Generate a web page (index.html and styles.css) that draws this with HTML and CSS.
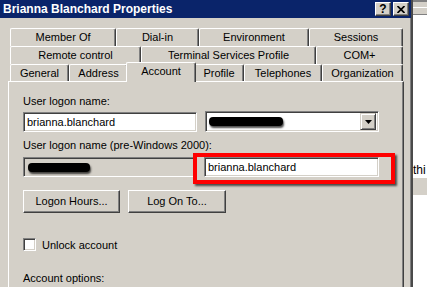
FILE: index.html
```html
<!DOCTYPE html>
<html lang="en">
<head>
    <meta charset="UTF-8">
    <title>Brianna Blanchard Properties</title>
    <link rel="stylesheet" href="styles.css">
</head>
<body>
    <div class="screen">
        <div class="dialog">
            <div class="titlebar">
                <span class="title">Brianna Blanchard Properties</span>
                <div class="caption-buttons">
                    <span class="cap-btn cap-help">?</span>
                    <span class="cap-btn">
                        <svg width="8" height="7" viewBox="0 0 8 7"><path d="M0.5 0 L7.5 7 M7.5 0 L0.5 7" stroke="#000" stroke-width="1.7" fill="none"/></svg>
                    </span>
                </div>
            </div>

            <!-- tab rows, back to front -->
            <div class="tabs">
                <div class="tab-row">
                    <span class="tab w-member">Member Of</span>
                    <span class="tab w-dialin">Dial-in</span>
                    <span class="tab w-env">Environment</span>
                    <span class="tab w-sessions">Sessions</span>
                </div>
                <div class="tab-row">
                    <span class="tab w-remote">Remote control</span>
                    <span class="tab w-terminal">Terminal Services Profile</span>
                    <span class="tab w-com">COM+</span>
                </div>
                <div class="tab-row front">
                    <span class="tab w-general">General</span>
                    <span class="tab w-address">Address</span>
                    <span class="tab w-account active">Account</span>
                    <span class="tab w-profile">Profile</span>
                    <span class="tab w-phones">Telephones</span>
                    <span class="tab w-org">Organization</span>
                </div>
            </div>

            <div class="panel">
                <div class="label">User logon name:</div>
                <div class="field-row">
                    <div class="edit w-half">brianna.blanchard</div>
                    <div class="combo">
                        <div class="combo-text"><span class="redact redact-combo"></span></div>
                        <span class="combo-btn">
                            <svg width="7" height="4" viewBox="0 0 7 4"><path d="M0 0 H7 L3.5 4 Z" fill="#000"/></svg>
                        </span>
                    </div>
                </div>

                <div class="label label-pre">User logon name (pre-Windows 2000):</div>
                <div class="field-row field-row-pre">
                    <div class="edit edit-disabled w-half"><span class="redact redact-domain"></span></div>
                    <div class="edit w-sam">brianna.blanchard</div>
                    <div class="highlight"></div>
                </div>

                <div class="button-row">
                    <span class="btn">Logon Hours...</span>
                    <span class="btn btn-wide">Log On To...</span>
                </div>

                <div class="check-row">
                    <span class="checkbox"></span>
                    <span>Unlock account</span>
                </div>

                <div class="label label-options">Account options:</div>
            </div>
        </div>

        <div class="behind">
            <div class="behind-top"></div>
            <div class="behind-text">thi</div>
            <div class="behind-band"></div>
        </div>
    </div>
</body>
</html>
```

FILE: styles.css
```css
body {
    margin: 0;
    font-family: "Liberation Sans", Arial, sans-serif;
    font-size: 11px;
    color: #000;
    background-color: #fff;
    overflow: hidden;
}
.screen {
    display: flex;
    width: 427px;
    height: 287px;
    overflow: hidden;
}
.dialog {
    width: 411px;
    height: 287px;
    flex-shrink: 0;
    background-color: #d4d0c8;
    border-right: 2px solid #4a4a4a;
    box-shadow: inset -1px 0 #808080;
}
.titlebar {
    height: 18px;
    background-color: #0a246a;
    display: flex;
    justify-content: space-between;
    align-items: flex-start;
}
.title {
    color: #fff;
    font-weight: bold;
    font-size: 12px;
    line-height: 18px;
    padding-left: 3px;
}
.caption-buttons {
    display: flex;
    gap: 2px;
    margin-top: 2px;
    margin-right: 2px;
}
.cap-btn {
    width: 16px;
    height: 14px;
    box-sizing: border-box;
    background-color: #d4d0c8;
    border-top: 1px solid #fff;
    border-left: 1px solid #fff;
    border-right: 1px solid #404040;
    border-bottom: 1px solid #404040;
    box-shadow: inset -1px -1px #808080;
    display: flex;
    align-items: center;
    justify-content: center;
}
.cap-help {
    font-weight: bold;
    font-size: 12px;
    line-height: 12px;
}

/* tabs */
.tabs {
    margin-top: 10px;
    margin-left: 10px;
    width: 393px;
}
.tab-row {
    display: flex;
    height: 18px;
    align-items: flex-start;
}
.tab-row.front {
    height: 17px;
}
.tab {
    height: 18px;
    box-sizing: border-box;
    line-height: 17px;
    text-align: center;
    background-color: #d4d0c8;
    border-top: 1px solid #fff;
    border-left: 1px solid #fff;
    border-right: 1px solid #404040;
    border-radius: 2px 2px 0 0;
    box-shadow: inset -1px 0 #808080;
    white-space: nowrap;
}
.front .tab {
    height: 17px;
}
.front .tab.active {
    position: relative;
    z-index: 1;
    height: 20px;
    margin: -2px -2px 0 -2px;
}
.w-member { width: 106px; }
.w-dialin { width: 83px; }
.w-env { width: 110px; }
.w-sessions { width: 94px; }
.w-remote { width: 131px; }
.w-terminal { width: 175px; }
.w-com { width: 87px; }
.w-general { width: 59px; }
.w-address { width: 59px; }
.w-account { width: 70px; }
.w-profile { width: 50px; }
.w-phones { width: 78px; }
.w-org { width: 81px; }

/* page */
.panel {
    margin-left: 8px;
    width: 396px;
    height: 206px;
    box-sizing: border-box;
    border-top: 1px solid #fff;
    border-left: 1px solid #fff;
    border-right: 1px solid #404040;
    box-shadow: inset -1px 0 #808080;
    padding: 13px 0 0 14px;
}
.label {
    line-height: 13px;
}
.field-row {
    display: flex;
    align-items: center;
    gap: 8px;
    margin-top: 3px;
    height: 21px;
}
.edit {
    height: 20px;
    box-sizing: border-box;
    background-color: #fff;
    border-top: 1px solid #808080;
    border-left: 1px solid #808080;
    border-right: 1px solid #fff;
    border-bottom: 1px solid #fff;
    box-shadow: inset 1px 1px #404040, inset -1px -1px #d4d0c8;
    padding-left: 3px;
    line-height: 18px;
    white-space: nowrap;
    overflow: hidden;
}
.w-half { width: 174px; }
.w-sam { width: 175px; }
.edit-disabled {
    background-color: #d4d0c8;
    display: flex;
    align-items: center;
}
.combo {
    width: 174px;
    height: 21px;
    box-sizing: border-box;
    background-color: #fff;
    border-top: 1px solid #808080;
    border-left: 1px solid #808080;
    border-right: 1px solid #fff;
    border-bottom: 1px solid #fff;
    box-shadow: inset 1px 1px #404040, inset -1px -1px #d4d0c8;
    display: flex;
    align-items: center;
    padding: 0 2px 0 3px;
}
.combo-text {
    flex: 1;
    display: flex;
    align-items: center;
}
.combo-btn {
    width: 16px;
    height: 17px;
    box-sizing: border-box;
    background-color: #d4d0c8;
    border-top: 1px solid #d4d0c8;
    border-left: 1px solid #d4d0c8;
    border-right: 1px solid #404040;
    border-bottom: 1px solid #404040;
    box-shadow: inset 1px 1px #fff, inset -1px -1px #808080;
    display: flex;
    align-items: center;
    justify-content: center;
}
.redact {
    display: inline-block;
    height: 9px;
    background-color: #000;
    border-radius: 4px;
    box-shadow: 1px 2px 2px rgba(0, 0, 0, 0.7);
}
.redact-combo { width: 74px; }
.redact-domain { width: 62px; margin-left: 1px; }

.label-pre {
    margin-top: 7px;
}
.field-row-pre {
    position: relative;
    height: 20px;
    margin-top: 5px;
    gap: 7px;
}
/* red annotation frame drawn over the screenshot */
.highlight {
    position: absolute;
    left: 170px;
    top: -4px;
    width: 202px;
    height: 31px;
    box-sizing: border-box;
    border: 4px solid #ff0000;
    box-shadow: 2px 2px 2px rgba(0, 0, 0, 0.65);
}

.button-row {
    display: flex;
    gap: 8px;
    margin-top: 13px;
}
.btn {
    width: 97px;
    height: 23px;
    box-sizing: border-box;
    border-top: 1px solid #fff;
    border-left: 1px solid #fff;
    border-right: 1px solid #404040;
    border-bottom: 1px solid #404040;
    box-shadow: inset -1px -1px #808080;
    text-align: center;
    line-height: 20px;
}
.btn-wide { width: 98px; }

.check-row {
    display: flex;
    align-items: center;
    gap: 6px;
    margin-top: 25px;
    height: 13px;
}
.checkbox {
    width: 13px;
    height: 13px;
    box-sizing: border-box;
    background-color: #fff;
    border-top: 1px solid #808080;
    border-left: 1px solid #808080;
    border-right: 1px solid #fff;
    border-bottom: 1px solid #fff;
    box-shadow: inset 1px 1px #404040, inset -1px -1px #d4d0c8;
}
.label-options {
    margin-top: 21px;
}

/* window behind the dialog */
.behind {
    width: 14px;
    flex-shrink: 0;
    background-color: #fff;
    overflow: hidden;
}
.behind-top {
    height: 15px;
    box-sizing: border-box;
    background-color: #d4d0c8;
    border-top: 2px solid #808080;
    border-bottom: 1px solid #808080;
    box-shadow: inset 0 5px #d4d0c8, inset 0 6px #fff;
}
.behind-text {
    margin-top: 148px;
    font-size: 12px;
    line-height: 14px;
    white-space: nowrap;
}
.behind-band {
    height: 17px;
    margin-top: 1px;
    background-color: #d4d0c8;
}
```
